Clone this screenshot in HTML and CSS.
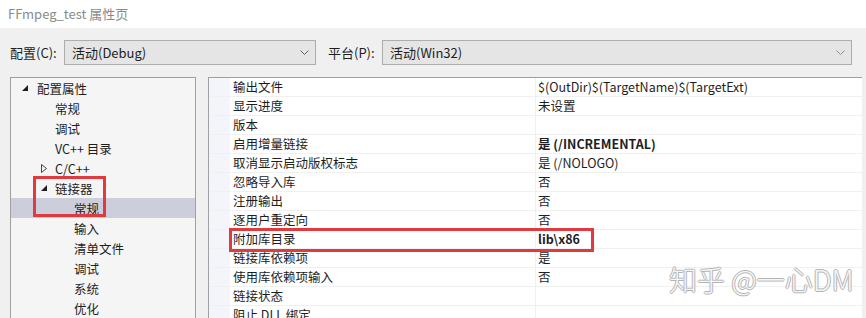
FILE: index.html
```html
<!DOCTYPE html>
<html lang="zh-CN">
<head>
  <meta charset="UTF-8">
  <title>FFmpeg_test 属性页</title>
  <link rel="stylesheet" href="styles.css">
</head>
<body>
  <div class="window">
    <div class="titlebar">FFmpeg_test 属性页</div>

    <div class="config">
      <span class="label">配置(C):</span>
      <div class="combo combo-config">
        <span>活动(Debug)</span>
        <svg class="arrow" width="9" height="6" viewBox="0 0 9 6"><path d="M0.5 0.5 L4.5 4.5 L8.5 0.5" fill="none" stroke="#606060" stroke-width="1"/></svg>
      </div>
      <span class="label label-platform">平台(P):</span>
      <div class="combo combo-platform">
        <span>活动(Win32)</span>
        <svg class="arrow" width="9" height="6" viewBox="0 0 9 6"><path d="M0.5 0.5 L4.5 4.5 L8.5 0.5" fill="none" stroke="#909090" stroke-width="1"/></svg>
      </div>
    </div>

    <div class="main">
      <div class="tree">
        <div class="node lv0"><svg class="tri" width="7" height="7" viewBox="0 0 7 7"><polygon points="6,0 6,6 0,6" fill="#1e1e1e"/></svg>配置属性</div>
        <div class="node lv1">常规</div>
        <div class="node lv1">调试</div>
        <div class="node lv1">VC++ 目录</div>
        <div class="node lv1 has-tri"><svg class="tri" width="7" height="9" viewBox="0 0 7 9"><polygon points="0.5,0.5 5.5,4.5 0.5,8.5" fill="none" stroke="#444" stroke-width="1"/></svg>C/C++</div>
        <div class="node lv1 has-tri"><svg class="tri" width="7" height="7" viewBox="0 0 7 7"><polygon points="6,0 6,6 0,6" fill="#1e1e1e"/></svg>链接器</div>
        <div class="node lv2 selected">常规</div>
        <div class="node lv2">输入</div>
        <div class="node lv2">清单文件</div>
        <div class="node lv2">调试</div>
        <div class="node lv2">系统</div>
        <div class="node lv2">优化</div>
      </div>

      <div class="grid">
        <div class="row"><span class="name">输出文件</span><span class="value">$(OutDir)$(TargetName)$(TargetExt)</span></div>
        <div class="row"><span class="name">显示进度</span><span class="value">未设置</span></div>
        <div class="row"><span class="name">版本</span><span class="value"></span></div>
        <div class="row"><span class="name">启用增量链接</span><span class="value bold">是 (/INCREMENTAL)</span></div>
        <div class="row"><span class="name">取消显示启动版权标志</span><span class="value">是 (/NOLOGO)</span></div>
        <div class="row"><span class="name">忽略导入库</span><span class="value">否</span></div>
        <div class="row"><span class="name">注册输出</span><span class="value">否</span></div>
        <div class="row"><span class="name">逐用户重定向</span><span class="value">否</span></div>
        <div class="row"><span class="name">附加库目录</span><span class="value bold">lib\x86</span></div>
        <div class="row"><span class="name">链接库依赖项</span><span class="value">是</span></div>
        <div class="row"><span class="name">使用库依赖项输入</span><span class="value">否</span></div>
        <div class="row"><span class="name">链接状态</span><span class="value"></span></div>
        <div class="row"><span class="name">阻止 DLL 绑定</span><span class="value"></span></div>
      </div>
    </div>

    <!-- 红框标注 -->
    <div class="mark mark-tree"></div>
    <div class="mark mark-grid"></div>

    <div class="watermark">知乎 @一心DM</div>
  </div>
</body>
</html>
```

FILE: styles.css
```css
* {
  box-sizing: border-box;
}

body {
  margin: 0;
  background: #f0f0f0;
  font-family: "Noto Sans CJK SC", "Noto Sans", sans-serif;
  font-size: 12px;
  color: #1e1e1e;
}

.window {
  position: relative;
  width: 866px;
  height: 318px;
  overflow: hidden;
}

.titlebar {
  height: 28px;
  background: #fff;
  padding-left: 8px;
  line-height: 27px;
  font-size: 13px;
  color: #8a8a8a;
}

.config {
  display: flex;
  align-items: center;
  height: 49px;
  padding: 0 0 0 10px;
}

.label {
  width: 54px;
  font-size: 13px;
}

.label-platform {
  margin-left: 12px;
}

.combo {
  display: flex;
  align-items: center;
  justify-content: space-between;
  height: 25px;
  padding: 0 6px 0 7px;
  background: #e5e5e5;
  border: 1px solid #adadad;
  font-size: 13px;
}

.combo-config {
  width: 252px;
}

.combo-platform {
  width: 470px;
}

.main {
  display: flex;
  gap: 12px;
  padding-left: 10px;
  height: 241px;
}

.tree {
  width: 186px;
  background: #f5f5f5;
  border: 1px solid #a0a0a0;
  border-bottom: none;
}

.node {
  display: flex;
  align-items: center;
  height: 20px;
  font-size: 12.5px;
}

.node .tri {
  flex: none;
  margin-right: 7px;
}

.lv0 {
  padding-left: 11px;
}

.lv0 .tri {
  margin-right: 8px;
}

.lv1 {
  padding-left: 44px;
}

.lv1.has-tri {
  padding-left: 30px;
}

.lv2 {
  padding-left: 63px;
}

.selected {
  background: #cccedb;
}

.grid {
  flex: 1;
  margin-right: 4px;
  background: #fff;
  border-top: 1px solid #a0a0a0;
  border-left: 1px solid #a0a0a0;
}

.row {
  display: flex;
  height: 19px;
  border-bottom: 1px solid #f0f0f0;
  line-height: 18px;
  font-size: 12.5px;
}

.row .name {
  width: 327px;
  padding-left: 24px;
  background: linear-gradient(to right, #f3f5fa 21px, #fff 21px);
  border-right: 1px solid #f0f0f0;
}

.row .value {
  flex: 1;
  padding-left: 2px;
}

.bold {
  font-weight: bold;
}

.mark {
  position: absolute;
  border: 3px solid #e0393e;
}

.mark-tree {
  left: 33px;
  top: 176px;
  width: 73px;
  height: 41px;
}

.mark-grid {
  left: 229px;
  top: 228px;
  width: 365px;
  height: 24px;
}

/* 水印：浅色填充 + 灰色描边 */
.watermark {
  position: absolute;
  left: 669px;
  top: 259px;
  font-size: 28px;
  font-weight: 300;
  color: #f6f6f6;
  text-shadow: 1px 0 0 #b4b4b4, -1px 0 0 #b4b4b4, 0 1px 0 #b4b4b4, 0 -1px 0 #b4b4b4;
  white-space: nowrap;
}
```
